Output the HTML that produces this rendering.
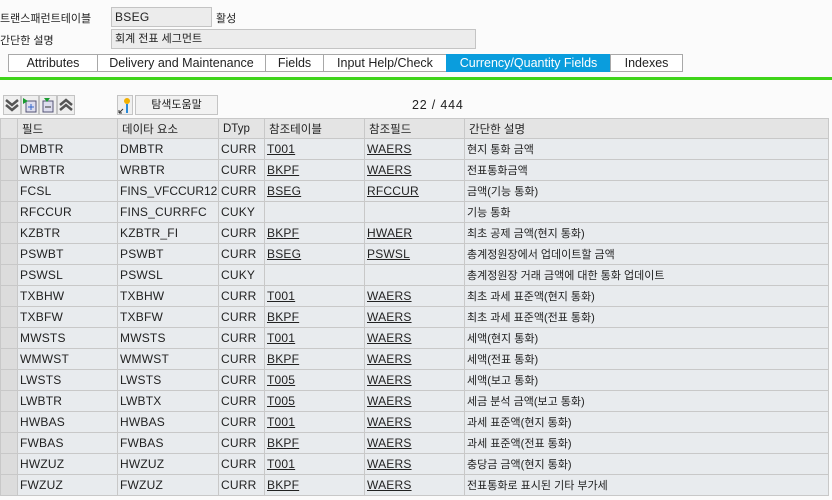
<!DOCTYPE html>
<html><head><meta charset="utf-8"><style>
*{margin:0;padding:0;box-sizing:border-box}
body{width:832px;height:500px;background:#fbfbfb;font-family:"Liberation Sans","Noto Sans CJK KR",sans-serif;font-size:12px;color:#222;position:relative;overflow:hidden}
.a{position:absolute;white-space:nowrap}
.box{position:absolute;background:#ececec;border:1px solid #c4c4c4;padding-left:3px;line-height:18px}
.tab{position:absolute;top:54px;height:18px;border:1px solid #a8a8a8;background:#fff;text-align:center;line-height:16px;font-size:12.5px}
table{position:absolute;left:0;top:118px;border-collapse:collapse;width:829px;table-layout:fixed}
td{height:21px;border:1px solid #c8c8c8;background:#e8ebee;padding-left:2px;font-size:12px;letter-spacing:0.2px;white-space:nowrap;overflow:visible}
td:nth-child(7){font-size:11px;letter-spacing:0}
tr.h td{background:#e4e4e4;height:20px;padding-left:4px;font-size:11.5px;letter-spacing:0}
td.s{background:#dcdcdc}
u{text-decoration:underline}
.ib{position:absolute;top:95px;width:18px;height:20px;border:1px solid #c4c4c4;background:#efefef}
.k{font-size:11px;letter-spacing:0}
.n{letter-spacing:0}
</style></head><body>
<div class="a k" style="left:0;top:10px">트랜스패런트테이블</div>
<div class="box" style="left:111px;top:7px;width:101px;height:20px;letter-spacing:0.3px">BSEG</div>
<div class="a k" style="left:216px;top:10px">활성</div>
<div class="a k" style="left:0;top:32px">간단한 설명</div>
<div class="box k" style="left:111px;top:29px;width:365px;height:20px">회계 전표 세그먼트</div>
<div class="tab" style="left:8px;width:90px">Attributes</div>
<div class="tab" style="left:97px;width:169px">Delivery and Maintenance</div>
<div class="tab" style="left:265px;width:59px">Fields</div>
<div class="tab" style="left:323px;width:124px">Input Help/Check</div>
<div class="tab" style="left:446px;width:165px;background:#0a9ddd;color:#fff;border-color:#0a9ddd">Currency/Quantity Fields</div>
<div class="tab" style="left:610px;width:73px">Indexes</div>
<div class="a" style="left:0;top:77px;width:832px;height:3px;background:#3fd41a"></div>
<div class="ib" style="left:3px"><svg width="16" height="18"><path d="M2 4l6 5 6-5M2 9l6 5 6-5" stroke="#555" stroke-width="2.5" fill="none"/></svg></div>
<div class="ib" style="left:21px"><svg width="16" height="18"><rect x="4" y="5" width="10" height="11" fill="#dde" stroke="#557"/><path d="M9 8v6M6 11h6" stroke="#36c"/><path d="M1 2l5 3-5 3z" fill="#1a9c30"/></svg></div>
<div class="ib" style="left:39px"><svg width="16" height="18"><rect x="3" y="5" width="10" height="11" fill="#dde" stroke="#557"/><path d="M5 11h6" stroke="#333"/><path d="M4 2h6l-3 4z" fill="#1a9c30"/></svg></div>
<div class="ib" style="left:57px"><svg width="16" height="18"><path d="M2 9l6-5 6 5M2 14l6-5 6 5" stroke="#555" stroke-width="2.5" fill="none"/></svg></div>
<div class="ib" style="left:117px;width:16px"><svg width="14" height="18"><circle cx="9" cy="5" r="3" fill="#f2b000"/><path d="M9 8v9" stroke="#2a8ad8" stroke-width="2"/><path d="M1 17l4-4M1 17h3M1 17v-3" stroke="#333"/></svg></div>
<div class="ib k" style="left:135px;width:83px;text-align:center;line-height:18px;background:#f2f2f2">탐색도움말</div>
<div class="a" style="left:412px;top:98px;letter-spacing:0.8px;font-size:12.5px">22 / 444</div>
<table>
<colgroup><col style="width:17px"><col style="width:100px"><col style="width:101px"><col style="width:46px"><col style="width:100px"><col style="width:100px"><col></colgroup>
<tr class="h"><td class="s"></td><td>필드</td><td>데이타 요소</td><td>DTyp</td><td>참조테이블</td><td>참조필드</td><td>간단한 설명</td></tr>
<tr><td class="s"></td><td>DMBTR</td><td>DMBTR</td><td>CURR</td><td><u>T001</u></td><td><u>WAERS</u></td><td>현지 통화 금액</td></tr>
<tr><td class="s"></td><td>WRBTR</td><td>WRBTR</td><td>CURR</td><td><u>BKPF</u></td><td><u>WAERS</u></td><td>전표통화금액</td></tr>
<tr><td class="s"></td><td>FCSL</td><td class="n">FINS_VFCCUR12</td><td>CURR</td><td><u>BSEG</u></td><td><u>RFCCUR</u></td><td>금액(기능 통화)</td></tr>
<tr><td class="s"></td><td>RFCCUR</td><td>FINS_CURRFC</td><td>CUKY</td><td></td><td></td><td>기능 통화</td></tr>
<tr><td class="s"></td><td>KZBTR</td><td>KZBTR_FI</td><td>CURR</td><td><u>BKPF</u></td><td><u>HWAER</u></td><td>최초 공제 금액(현지 통화)</td></tr>
<tr><td class="s"></td><td>PSWBT</td><td>PSWBT</td><td>CURR</td><td><u>BSEG</u></td><td><u>PSWSL</u></td><td>총계정원장에서 업데이트할 금액</td></tr>
<tr><td class="s"></td><td>PSWSL</td><td>PSWSL</td><td>CUKY</td><td></td><td></td><td>총계정원장 거래 금액에 대한 통화 업데이트</td></tr>
<tr><td class="s"></td><td>TXBHW</td><td>TXBHW</td><td>CURR</td><td><u>T001</u></td><td><u>WAERS</u></td><td>최초 과세 표준액(현지 통화)</td></tr>
<tr><td class="s"></td><td>TXBFW</td><td>TXBFW</td><td>CURR</td><td><u>BKPF</u></td><td><u>WAERS</u></td><td>최초 과세 표준액(전표 통화)</td></tr>
<tr><td class="s"></td><td>MWSTS</td><td>MWSTS</td><td>CURR</td><td><u>T001</u></td><td><u>WAERS</u></td><td>세액(현지 통화)</td></tr>
<tr><td class="s"></td><td>WMWST</td><td>WMWST</td><td>CURR</td><td><u>BKPF</u></td><td><u>WAERS</u></td><td>세액(전표 통화)</td></tr>
<tr><td class="s"></td><td>LWSTS</td><td>LWSTS</td><td>CURR</td><td><u>T005</u></td><td><u>WAERS</u></td><td>세액(보고 통화)</td></tr>
<tr><td class="s"></td><td>LWBTR</td><td>LWBTX</td><td>CURR</td><td><u>T005</u></td><td><u>WAERS</u></td><td>세금 분석 금액(보고 통화)</td></tr>
<tr><td class="s"></td><td>HWBAS</td><td>HWBAS</td><td>CURR</td><td><u>T001</u></td><td><u>WAERS</u></td><td>과세 표준액(현지 통화)</td></tr>
<tr><td class="s"></td><td>FWBAS</td><td>FWBAS</td><td>CURR</td><td><u>BKPF</u></td><td><u>WAERS</u></td><td>과세 표준액(전표 통화)</td></tr>
<tr><td class="s"></td><td>HWZUZ</td><td>HWZUZ</td><td>CURR</td><td><u>T001</u></td><td><u>WAERS</u></td><td>충당금 금액(현지 통화)</td></tr>
<tr><td class="s"></td><td>FWZUZ</td><td>FWZUZ</td><td>CURR</td><td><u>BKPF</u></td><td><u>WAERS</u></td><td>전표통화로 표시된 기타 부가세</td></tr>
</table>
</body></html>
